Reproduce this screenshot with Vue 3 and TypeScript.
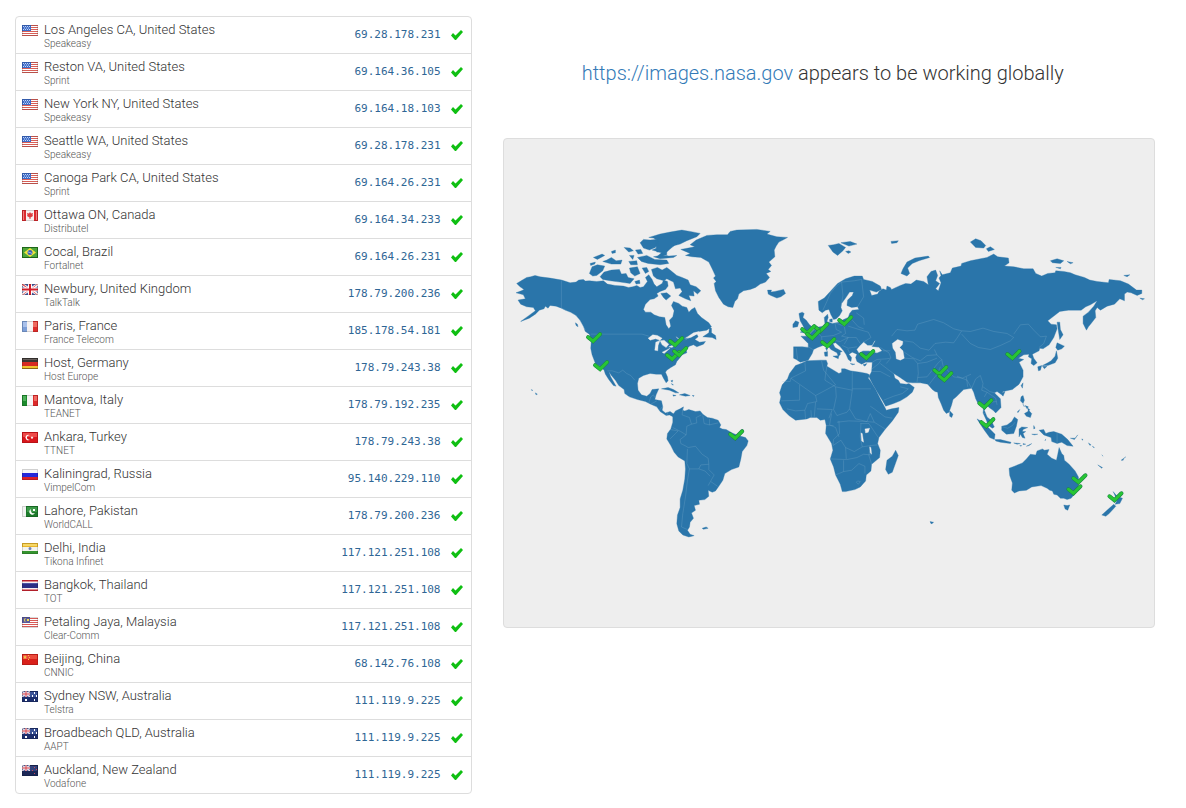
<script setup lang="ts">
type Shape = [fill: string, d: string]

interface Server {
  flag: string
  place: string
  provider: string
  ip: string
}

const box = 'M0 0h16v11H0z'
const stripes = 'M0 1h16v1H0zM0 3h16v1H0zM0 5h16v1H0zM0 7h16v1H0zM0 9h16v1H0z'
const unionJack: Shape[] = [
  ['#4c5ea3', 'M0 0h8v6H0z'],
  ['#e9dfe8', 'M0 0h1l7 5v1H7L0 1zM7 0h1v1L1 6H0V5z'],
  ['#f3e6ea', 'M3 0h2v6H3zM0 2h8v2H0z'],
  ['#d4434c', 'M3.5 0h1v6h-1zM0 2.5h8v1H0z'],
]

const flags: Record<string, Shape[]> = {
  us: [
    ['#fff', box],
    ['#d95f57', 'M0 0h16v1H0zM0 2h16v1H0zM0 4h16v1H0zM0 6h16v1H0zM0 8h16v1H0zM0 10h16v1H0z'],
    ['#3d6cc9', 'M0 0h9v6H0z'],
    ['#c5d6f5', 'M1 1h1v1H1zM3 1h1v1H3zM5 1h1v1H5zM7 1h1v1H7zM2 2.5h1v1H2zM4 2.5h1v1H4zM6 2.5h1v1H6zM1 4h1v1H1zM3 4h1v1H3zM5 4h1v1H5zM7 4h1v1H7z'],
  ],
  ca: [
    ['#f7f2f2', box],
    ['#dc2a2e', 'M0 0h4v11H0zM12 0h4v11h-4z'],
    ['#ee7f7f', 'M1 1h1v9H1zM14 1h1v9h-1z'],
    ['#dd3b3d', 'M8 2l1 1.5 2-.5-.5 2L11 6 8.5 7.5V9h-1V7.500L5 6l.5-1L5 3l2 .5z'],
  ],
  br: [
    ['#247a1d', box],
    ['#4da53c', 'M1 1h14v9H1z'],
    ['#f0e63c', 'M8 1l6 4.500L8 10 2 5.500z'],
    ['#3c62b5', 'M8 3a2.500 2.500 0 1 1 0 5a2.500 2.500 0 1 1 0-5z'],
    ['#b9cdea', 'M6 4.500l4 1.500v.7L6 5.200z'],
  ],
  gb: [
    ['#4a5aa0', box],
    ['#fff', 'M0 0h2l14 9v2h-2L0 2zM14 0h2v2L2 11H0V9z'],
    ['#d8454c', 'M0 0h1l5 4H5L0 1zM15 0h1L11 4h-1zM16 11h-1l-5-4h1zM0 11h1l5-4H5z'],
    ['#fff', 'M6 0h4v11H6zM0 3.500h16v4H0z'],
    ['#d21f2b', 'M7 0h2v11H7zM0 4.500h16v2H0z'],
  ],
  fr: [['#f6f2f2', box], ['#7d9fd8', 'M0 0h5v11H0z'], ['#a9c0ea', 'M1 1h4v5H1z'], ['#dd2d2b', 'M11 0h5v11h-5z'], ['#ee6a5f', 'M11 1h4v5h-4z']],
  de: [['#3a3533', box], ['#655d5a', 'M1 1h14v1H1z'], ['#d62a22', 'M0 4h16v4H0z'], ['#f0c22e', 'M0 8h16v3H0z'], ['#a77b16', 'M0 10h16v1H0z']],
  it: [['#f7f5f5', box], ['#1d8a2d', 'M0 0h5v11H0z'], ['#4fb05a', 'M1 1h3v5H1z'], ['#dc2a2b', 'M11 0h5v11h-5z'], ['#ef6a62', 'M12 1h3v5h-3z']],
  tr: [
    ['#d9161c', box],
    ['#ee4a49', 'M1 1h14v4H1z'],
    ['#fff', 'M8 3.500A2.700 2.700 0 1 0 8 7.500A2.200 2.200 0 1 1 8 3.500zM10 4l.5 1h1l-.8.7.3 1.200-1-.6-1 .6.300-1.200-.8-.7h1z'],
  ],
  ru: [['#f5f5f5', box], ['#2427d8', 'M0 4h16v4H0z'], ['#d91f26', 'M0 8h16v3H0z']],
  pk: [
    ['#f2f4f2', box],
    ['#1c7a2b', 'M4 0h12v11H4z'],
    ['#3c9a48', 'M5 1h10v5H5z'],
    ['#fff', 'M9 3A3 3 0 1 0 13 7A3 3 0 0 1 9 3zM11 3h2v2h-2z'],
  ],
  in: [['#f4f4ee', box], ['#e9b72c', 'M0 0h16v4H0z'], ['#f6d766', 'M1 1h14v2H1z'], ['#35942f', 'M0 8h16v3H0z'], ['#6f83b4', 'M8 4a1.500 1.500 0 1 1 0 3a1.500 1.500 0 1 1 0-3z']],
  th: [['#f4f1f3', box], ['#d02532', 'M0 0h16v1.500H0zM0 9.500h16V11H0z'], ['#2b2f86', 'M0 3h16v5H0z'], ['#5055a8', 'M0 3h16v1H0z']],
  my: [
    ['#fff', box],
    ['#d85a56', stripes],
    ['#5a5a9c', 'M0 0h8v6H0z'],
    ['#f1df4f', 'M4 1a2 2 0 1 0 0 4A2.500 2.500 0 0 1 4 1zM5 2h2v2H5z'],
  ],
  cn: [['#d9201a', box], ['#ec4b3c', 'M1 1h14v4H1z'], ['#f5c84a', 'M3 1l.8 1.500H5L4 3.500 4.500 5 3 4.200 1.500 5 2 3.500l-1-1h1.300zM6 1h1v1H6zM7 3h1v1H7zM6 5h1v1H6z']],
  au: [['#1d2f6e', box], ['#3c5497', 'M1 1h14v5H1z'], ...unionJack, ['#fff', 'M3 8h2v2H3zM12 1h1v2h-1zM10 4h1v2h-1zM14 4h1v2h-1zM12 8h1v2h-1z']],
  nz: [['#1b2757', box], ['#34437c', 'M1 1h14v5H1z'], ...unionJack, ['#c94a5c', 'M12 2h1v1h-1zM10 5h1v1h-1zM14 4h1v1h-1zM12 8h1v1h-1z']],
}

const servers: Server[] = [
  { flag: 'us', place: 'Los Angeles CA, United States', provider: 'Speakeasy', ip: '69.28.178.231' },
  { flag: 'us', place: 'Reston VA, United States', provider: 'Sprint', ip: '69.164.36.105' },
  { flag: 'us', place: 'New York NY, United States', provider: 'Speakeasy', ip: '69.164.18.103' },
  { flag: 'us', place: 'Seattle WA, United States', provider: 'Speakeasy', ip: '69.28.178.231' },
  { flag: 'us', place: 'Canoga Park CA, United States', provider: 'Sprint', ip: '69.164.26.231' },
  { flag: 'ca', place: 'Ottawa ON, Canada', provider: 'Distributel', ip: '69.164.34.233' },
  { flag: 'br', place: 'Cocal, Brazil', provider: 'Fortalnet', ip: '69.164.26.231' },
  { flag: 'gb', place: 'Newbury, United Kingdom', provider: 'TalkTalk', ip: '178.79.200.236' },
  { flag: 'fr', place: 'Paris, France', provider: 'France Telecom', ip: '185.178.54.181' },
  { flag: 'de', place: 'Host, Germany', provider: 'Host Europe', ip: '178.79.243.38' },
  { flag: 'it', place: 'Mantova, Italy', provider: 'TEANET', ip: '178.79.192.235' },
  { flag: 'tr', place: 'Ankara, Turkey', provider: 'TTNET', ip: '178.79.243.38' },
  { flag: 'ru', place: 'Kaliningrad, Russia', provider: 'VimpelCom', ip: '95.140.229.110' },
  { flag: 'pk', place: 'Lahore, Pakistan', provider: 'WorldCALL', ip: '178.79.200.236' },
  { flag: 'in', place: 'Delhi, India', provider: 'Tikona Infinet', ip: '117.121.251.108' },
  { flag: 'th', place: 'Bangkok, Thailand', provider: 'TOT', ip: '117.121.251.108' },
  { flag: 'my', place: 'Petaling Jaya, Malaysia', provider: 'Clear-Comm', ip: '117.121.251.108' },
  { flag: 'cn', place: 'Beijing, China', provider: 'CNNIC', ip: '68.142.76.108' },
  { flag: 'au', place: 'Sydney NSW, Australia', provider: 'Telstra', ip: '111.119.9.225' },
  { flag: 'au', place: 'Broadbeach QLD, Australia', provider: 'AAPT', ip: '111.119.9.225' },
  { flag: 'nz', place: 'Auckland, New Zealand', provider: 'Vodafone', ip: '111.119.9.225' },
]

interface Region {
  transform: string
  land: string
  water?: string
  borders?: string
}

// Each region keeps its own local grid, three units to one map unit.
const regions: Region[] = [
  {
    // North America, Greenland, Caribbean
    transform: 'translate(500 220) scale(.33333)',
    land:
      'M50 190L62 183 80 172 92 170 105 166 120 170 150 174 185 180 210 188 228 186 236 180 250 178 256 183 268 182 290 184 310 182 322 192 345 196 370 198 385 202 398 200 410 196 420 202 430 200 442 184 436 172 446 164 456 178 462 192 470 200 486 190 490 180 502 184 504 198 496 208 480 214 470 220 474 228 462 236 450 238 436 252 430 268 436 276 452 276 462 284 478 290 494 292 498 314 506 326 512 318 508 300 518 290 522 272 514 256 520 244 536 250 546 258 560 262 566 276 574 268 584 262 592 280 604 292 626 308 634 320 620 330 596 334 580 340 560 356 552 362 572 350 590 342 594 350 584 358 598 366 616 364 610 372 590 380 580 374 568 378 558 388 560 398 546 404 540 412 530 424 526 434 512 442 500 450 496 456 502 470 504 482 498 488 490 474 484 462 468 462 450 460 430 466 416 474 412 490 414 510 424 524 440 528 450 520 456 508 476 506 468 524 464 538 484 542 488 560 486 570 496 578 510 574 522 582 520 590 508 584 498 586 480 574 470 560 452 552 436 544 412 538 388 530 374 520 372 508 356 496 346 480 334 466 326 454 332 470 340 484 348 498 340 496 326 478 316 462 312 450 302 440 286 430 276 404 272 384 274 360 268 342 256 334 250 318 240 300 228 286 212 276 196 270 184 264 168 258 150 256 144 264 136 258 132 266 118 270 106 282 88 294 62 304 84 288 106 272 100 262 80 260 62 252 54 240 76 236 70 224 48 218 64 212 72 208 60 200z' +
      'M542 88L564 84 584 80 570 74 588 60 620 46 650 44 682 44 690 34 710 30 770 28 810 34 800 42 830 50 862 52 848 60 836 66 828 78 822 90 824 110 806 126 814 136 804 148 812 154 798 160 808 172 796 186 780 192 766 202 750 208 730 212 716 222 712 236 704 244 698 262 684 260 670 252 656 232 646 212 642 190 648 184 640 174 646 168 636 146 626 126 602 112 576 110 556 106 570 100z' +
      'M446 52L480 42 510 36 545 30 570 34 600 40 590 50 560 62 540 72 524 76 500 90 500 104 470 110 484 98 456 90 470 84 476 64 460 54zM420 68L430 58 450 60 466 58 474 66 466 82 448 90 430 84zM466 62L510 44 540 60 520 78 500 96 470 96zM460 110L490 104 506 108 530 106 520 112 480 116z' +
      'M268 160L276 140 292 134 314 138 308 152 290 166 278 168zM300 170L312 156 334 150 358 148 364 162 378 160 384 172 402 176 390 190 360 186 330 182 308 178zM280 112L306 102 314 106 292 118zM308 124L320 120 334 112 348 122 366 120 362 132 334 132zM334 94L346 90 346 98 336 100zM372 82L390 84 400 92 386 96zM406 90L422 88 428 100 414 102zM388 106L402 106 398 118zM412 112L440 106 464 118 500 120 506 130 480 134 444 130 424 124zM388 144L412 140 420 160 404 168 392 158zM426 144L440 142 446 154 436 160zM386 124L410 122 412 134 392 134zM270 130L286 126 284 132 272 136zM404 184L418 180 420 190 408 192z' +
      'M454 148L472 142 486 150 500 142 510 150 530 166 546 172 564 180 570 194 588 200 602 212 592 222 580 212 582 228 566 226 572 242 556 236 536 226 546 214 540 204 526 206 520 186 500 176 492 182 470 176 460 168zM482 220L500 218 512 228 498 240 490 232zM608 350L626 338 628 322 634 324 634 338 646 346 648 358 636 352z' +
      'M226 308L232 312 234 320 228 316zM254 330L264 332 278 344 272 346zM484 506L504 502 520 508 536 518 526 518 508 510zM538 524L554 520 570 526 556 528zM518 524L528 526 520 528zM576 526L582 526 580 529zM512 482L518 480 516 486zM514 490L520 494 516 494zM106 518L112 522 108 524zM94 508L98 510 96 512z' +
      'M802 210L814 210 812 216 824 214 850 208 856 220 842 230 830 234 812 226 804 222z',
    water: 'M444 354L458 344 472 346 486 354 480 360 466 356 450 360zM467 366L480 360 474 376 473 392 464 390zM480 362L492 360 506 372 498 382 486 374zM486 396L510 384 492 400zM506 380L524 373 516 382zM556 354L580 338 596 334 590 342 572 352zM528 350L540 362 538 358zM486 236L494 240 488 244z',
    borders: 'M184 180V264L208 276 226 284 240 302 256 330M272 342H426L446 348M474 362L488 376 504 384 526 378 540 364 560 350 566 356M322 452L336 452 356 458 368 450 380 460 392 466 404 480M446 548L452 530 460 524 464 532M452 552L470 542 M478 570L488 558M500 584L504 576',
  },
  {
    // South America
    transform: 'translate(650 380) scale(.33333)',
    land: 'M68 104L76 92 90 86 100 80 98 90 104 92 116 88 136 94 150 92 158 102 172 112 186 114 204 120 212 134 208 142 216 146 228 148 246 158 264 166 286 172 294 182 290 196 276 214 272 236 266 260 244 268 224 280 218 300 206 318 196 332 186 336 174 330 176 348 164 358 146 360 148 372 132 376 136 390 124 398 130 414 120 426 118 440 112 450 120 462 132 466 116 470 98 464 86 452 80 430 82 404 90 382 90 356 98 330 104 296 106 266 104 242 84 230 72 216 62 196 50 176 52 160 62 146 68 126zM156 444L168 440 174 444 160 447z',
    borders: 'M98 84L96 104 118 112 124 132 110 138 108 164 90 178 92 190 108 198 114 202 136 198 156 222 174 234 176 252 152 254 146 266 118 266 110 250 112 206M60 148L84 152 76 160 60 176M68 142L92 154 108 164M124 132L140 128 138 112 154 104M158 106L162 130 178 134 204 128M178 116V134M176 252L176 268 192 284 184 298 174 316M146 266L164 272 180 288M182 304L202 318M118 266L112 300 106 350 98 400 94 440 112 448',
  },
  {
    // Europe and Asia
    transform: 'translate(780 230) scale(.33333)',
    land:
      'M40 350L66 350 84 352 84 340 74 330 62 318 82 318 92 308 108 292 128 288 134 280 132 262 142 252 144 262 140 274 156 280 176 276 190 268 204 262 208 250 216 240 236 238 232 230 214 232 200 226 202 210 216 196 220 186 208 186 196 204 184 220 182 232 186 242 178 256 168 266 160 268 152 254 146 238 136 240 126 248 116 240 114 214 132 204 150 184 172 160 196 146 222 138 246 138 250 148 276 154 300 168 304 178 288 186 268 180 274 196 292 192 296 184 308 176 318 180 320 168 330 172 334 178 360 166 376 160 392 162 408 150 430 154 444 164 440 140 452 124 466 120 472 136 466 152 478 160 466 176 474 182 482 158 476 144 482 136 478 122 486 134 510 128 516 114 542 108 544 100 570 92 600 86 620 82 640 72 652 80 684 84 686 98 672 108 700 110 730 116 758 116 766 130 784 138 802 130 824 128 826 122 850 124 870 128 884 134 912 142 928 150 950 154 984 158 986 148 1020 152 1044 162 1068 180 1084 180 1084 190 1070 196 1052 188 1040 186 1032 192 1032 212 1018 206 1002 222 980 228 960 240 950 232 944 242 946 262 932 280 924 290 918 300 908 280 908 258 924 246 940 228 950 212 930 224 916 230 902 240 864 240 838 244 802 272 812 282 828 284 830 296 820 322 806 344 788 356 778 354 776 362 756 372 760 384 770 398 760 406 752 400 754 386 744 380 746 372 730 374 714 384 730 388 716 396 728 420 728 440 716 462 696 478 668 484 662 492 650 484 642 488 648 494 660 506 662 532 646 548 638 540 626 532 620 526 612 540 620 560 632 570 642 590 636 594 624 586 618 570 608 548 610 530 602 518 592 518 586 506 580 486 574 474 564 476 550 478 540 488 528 500 518 508 514 524 506 546 498 550 490 540 482 520 474 502 472 486 464 484 456 478 442 462 420 458 396 458 380 456 368 448 356 440 340 430 344 444 354 450 360 460 378 462 386 460 402 472 396 486 380 500 360 512 340 520 316 528 306 510 290 484 276 460 266 440 274 424 276 396 256 396 244 402 230 394 226 382 230 372 216 366 206 372 214 382 212 394 204 388 198 374 190 362 180 350 166 338 158 340 164 352 186 364 180 366 180 374 174 378 170 368 152 358 140 344 128 346 112 352 100 358 96 370 84 390 60 396 48 388 40 384z' +
      'M56 250L66 246 72 250 68 262 78 270 88 284 98 292 94 302 72 308 60 306 74 298 68 286 60 272zM38 282L46 272 56 276 52 290 38 292zM144 46L160 44 176 40 196 52 188 62 172 76 158 66zM182 38L210 34 230 42 206 48zM196 64L206 62 212 66 204 70zM362 130L368 116 380 96 404 84 444 78 448 82 416 92 396 100 382 114 388 130 380 138zM332 34L354 32 350 38 334 40z' +
      'M570 36L586 26 602 32 616 46 610 54 586 52zM618 56L630 50 642 58 624 64zM810 92L830 86 850 92 840 100 816 98zM860 94L878 98 870 101zM826 112L842 112 840 116zM1030 136L1048 134 1040 140zM1078 204L1092 206 1086 209z' +
      'M830 276L838 276 840 298 848 314 838 328 834 304zM826 352L830 338 852 348 844 356 832 360zM828 362L832 384 824 398 802 406 786 406 802 398 812 392 824 378zM772 410L784 406 780 420 774 422zM786 408L800 408 792 416zM722 466L728 458 726 474zM660 490L674 484 668 498z' +
      'M158 378L176 376 174 386zM132 366L142 364 142 378 134 378zM136 354L142 352 140 362zM210 400L224 402 216 404zM248 404L260 400 254 408zM148 268L156 266 156 276 148 274z',
    water: 'M230 358L240 346 250 336 262 346 276 346 284 332 274 350 296 352 304 362 290 368 266 362 248 362 236 368zM336 340L352 328 368 334 366 344 358 352 368 362 372 384 360 390 348 386 346 366 338 354z',
    borders:
      'M60 350H84L98 358M48 354L52 388M128 240L140 214 150 190 168 168 184 156M184 156L188 196 182 232M244 148L250 200 232 230M184 156L222 152 244 148M104 300L124 320 126 342M124 320L160 316 184 306 168 298 164 278M164 278L192 288 196 310 184 318 204 322 192 342M156 330L180 334 204 322 228 322 240 340M204 288L236 298 264 306 272 322 250 336M216 270L234 290 250 296M228 248L250 264 252 284M186 346L204 354 230 350M202 356L208 368M300 352L326 368 332 384 318 386 290 388 276 396M308 362L330 362M334 318L350 298 380 302 404 300 412 282 460 268 490 278 520 296 544 302M544 302L530 324 520 338 496 336 464 340 446 360 420 354 398 336 372 332M372 366L396 382 420 392 440 376 470 374 462 358M372 384L400 386 412 400 414 430 410 456M412 400L440 396 470 384M470 374L484 388 472 400 456 420 440 440 412 442M484 388L488 406 520 440 546 444 572 432M444 466L456 450 472 430 480 410M530 438L560 450 574 474M558 440L562 470M544 302L570 304 608 294 640 304 680 310 700 322 690 332 660 346 630 358 594 352 570 340 544 312M700 312L720 284 744 282 760 300 780 320 798 318 790 340 776 352M574 474L586 446 600 436 608 460 604 480 620 486 612 500M608 470L628 484 642 488M620 486L646 504 650 524M630 516L648 514M270 420L296 400 302 390M276 424L300 424 330 440M300 400L326 420 342 432M318 400L330 386M310 510L340 498 366 490 384 476M360 470L384 476',
  },
  {
    // Africa
    transform: 'translate(770 350) scale(.33333)',
    land: 'M76 46L92 40 110 32 150 30 168 30 172 40 170 48 190 60 206 70 214 66 214 56 224 56 240 62 270 66 290 70 298 74 294 84 300 92 316 118 330 146 344 172 348 180 364 176 386 172 384 186 366 212 344 238 326 262 322 280 330 300 328 322 304 342 302 362 288 374 286 392 270 410 254 418 226 424 216 424 210 402 196 374 190 350 180 326 188 300 184 280 166 250 168 226 164 208 150 210 140 202 120 202 110 206 76 210 56 196 38 178 28 158 32 140 28 128 36 104 52 86 58 70zM376 300L384 316 366 366 354 372 346 358 350 330 366 318zM480 514L490 516 484 520z',
    water: 'M284 236L298 234 294 246 286 248zM272 248L276 250 280 276 274 272zM298 290L302 292 304 312 300 308z',
    borders: 'M104 36L106 62 62 84 60 94 36 94M62 84L136 136 196 104 160 60 154 32M170 48L166 72 164 90 196 110 246 120 246 62M246 116H302M88 104L88 150 32 152M246 120L238 176 256 206 290 214 300 190M196 110L198 140 190 178 200 196 230 186 238 176M136 136L140 154 112 160 104 180 76 182 50 176M104 180L106 206M122 180L124 204M136 156L132 200M140 176L186 178 176 204M184 190L178 224 196 232 206 260M168 226H190M200 216L236 212 290 214 312 216 344 236M300 168L312 176 344 200 366 204 M300 190L312 216M206 212L208 250 190 268 188 286 212 270 226 292 252 304 276 290 270 260 272 220M270 220H296L324 262M180 326L230 328 260 322 280 312 302 314M226 292L228 326M220 330V364L196 374M220 364L244 360 266 340 284 348 284 370M276 290L300 286 322 284M262 392L270 394 264 402 258 396zM300 286L296 316 304 342',
  },
  {
    // South-East Asia and Oceania
    transform: 'translate(920 360) scale(.33333)',
    land:
      'M266 324L282 318 306 308 318 296 330 282 346 284 350 272 366 266 372 270 386 268 380 282 394 294 408 300 412 282 416 262 424 280 430 286 432 300 446 312 464 332 474 350 474 376 464 400 452 414 440 418 430 414 420 414 410 404 400 402 396 392 388 390 380 384 362 376 334 380 318 390 296 392 282 398 274 390 276 368 268 346zM430 434L440 436 448 434 442 450 434 446zM544 464L562 448 580 432 586 438 566 460 556 468zM578 394L590 408 606 414 598 430 584 432 590 420z' +
      'M170 176L184 184 204 202 224 222 222 238 208 232 192 210 180 192zM224 238L240 238 272 246 270 250 240 246 226 242zM280 248L300 250 290 252zM298 256L304 256 302 258zM318 258L334 250 326 256zM308 250L316 252 308 253zM244 198L260 194 274 184 282 170 292 178 288 198 280 220 258 222 244 210zM296 206L304 200 322 202 308 208 306 214 316 214 308 220 314 234 306 232 300 222 296 230zM340 196L344 204 340 206zM334 222L352 222 342 224zM356 210L370 208 376 220 386 216 400 214 424 222 442 238 458 258 440 256 424 246 410 250 394 244 392 232 370 224zM450 234L464 234 472 224 462 238zM376 236L374 242z' +
      'M302 110L308 106 312 120 308 130 300 122zM314 136L324 140 320 146zM308 132L312 140zM312 160L326 152 334 160 330 172 318 168zM322 144L328 148 324 156zM290 156L298 148 294 156zM88 152L98 162 94 172 88 168zM30 484L38 487 32 490zM484 236L488 238 486 240zM504 248L512 254 508 255zM516 258L522 262 518 261zM532 314L546 322 544 324zM544 284L548 288zM602 300L610 294 608 300zM610 294L616 290z',
    borders: 'M410 218V248M246 200L262 204 276 196 284 186M186 158L194 160',
  },
]

const markers: [number, number][] = [
  [593, 341], [600, 369], [675, 345], [672, 359], [679, 355], [735, 438],
  [820, 331], [807, 333], [812, 338], [827, 346], [844, 324], [866, 358],
  [939, 374], [944, 380], [1012, 358], [984, 407], [986, 426],
  [1078, 482], [1073, 493], [1114, 500],
]
</script>

<template>
  <main class="page">
    <section class="results" aria-label="Server results">
      <ul class="server-list">
        <li v-for="server in servers" :key="server.place" class="server">
          <svg class="flag" viewBox="0 0 16 11" aria-hidden="true">
            <path v-for="([fill, d], i) in flags[server.flag]" :key="i" :fill="fill" :d="d" />
            <path class="flag-edge" d="M.5 .5h15v10H.5z" />
          </svg>
          <div class="where">
            <div class="place">{{ server.place }}</div>
            <div class="provider">{{ server.provider }}</div>
          </div>
          <span class="ip">{{ server.ip }}</span>
          <svg class="tick" viewBox="0 0 12 10" role="img" aria-label="Working">
            <path d="M0 5.500L2 3 4.500 5.500 10 0 12 2 5 10 4 10z" />
          </svg>
        </li>
      </ul>
    </section>

    <section class="summary">
      <h1 class="headline">
        <a href="https://images.nasa.gov">https://images.nasa.gov</a> appears to be working globally
      </h1>
      <div class="map-panel">
        <svg class="map" viewBox="504 139 650 488" role="img" aria-label="World map of server locations">
          <g v-for="region in regions" :key="region.transform" :transform="region.transform">
            <path class="land" :d="region.land" />
            <path v-if="region.water" class="water" :d="region.water" />
            <path v-if="region.borders" class="border" :d="region.borders" />
          </g>
          <g v-for="([x, y], i) in markers" :key="i" :transform="`translate(${x} ${y})`">
            <path class="marker-edge" d="M-5 -4L0 0 7 -7" />
            <path class="marker" d="M-5 -4L0 0 7 -7" />
          </g>
        </svg>
      </div>
    </section>
  </main>
</template>

<style>
body {
  margin: 0;
  background: #fff;
}
</style>

<style scoped>
.page {
  display: grid;
  grid-template-columns: 5fr 7fr;
  padding: 16px 16px 14px 0;
  color: #333;
  font-family: Roboto, "Liberation Sans", Arial, sans-serif;
  font-weight: 300;
}

.results,
.summary {
  min-width: 0;
  padding: 0 15px;
}

.results {
  padding-right: 16px;
}

.server-list {
  margin: 0;
  padding: 0;
  list-style: none;
  border: 1px solid #ddd;
  border-radius: 4px;
}

.server {
  display: flex;
  align-items: center;
  padding: 5px 8px 3px 6px;
}

.server + .server {
  border-top: 1px solid #ddd;
}

.flag {
  flex: none;
  align-self: flex-start;
  width: 16px;
  height: 11px;
  margin: 3px 6px 0 0;
}

.flag-edge {
  fill: none;
  stroke: #000;
  stroke-opacity: .15;
}

.where {
  flex: 1;
  min-width: 0;
}

.place {
  font-size: 13px;
  line-height: 16px;
}

.provider {
  color: #555;
  font-size: 10px;
  line-height: 12px;
}

.ip {
  margin-bottom: 2px;
  color: #2f6695;
  font-family: "DejaVu Sans Mono", "Liberation Mono", monospace;
  font-size: 11px;
  font-weight: 400;
  line-height: 16px;
}

.tick {
  flex: none;
  width: 12px;
  height: 10px;
  margin: 0 0 2px 10px;
  fill: #0fbf12;
}

.headline {
  margin: 44px 0 52px;
  padding-right: 12px;
  font-size: 20px;
  font-weight: 300;
  line-height: 26px;
  text-align: center;
}

.headline a {
  color: #337ab7;
  text-decoration: none;
}

.map-panel {
  overflow: hidden;
  border: 1px solid #ddd;
  border-radius: 4px;
  background: #eee;
}

.map {
  display: block;
  width: 100%;
  height: auto;
}

.land {
  fill: #2a75aa;
  stroke: #2a75aa;
  stroke-width: 1;
  stroke-linejoin: round;
}

.water {
  fill: #eee;
  stroke: #eee;
  stroke-width: 1;
}

.border {
  fill: none;
  stroke: #8fb8d3;
  stroke-width: 1;
  stroke-opacity: .7;
  stroke-linejoin: round;
}

.marker-edge,
.marker {
  fill: none;
  stroke: #1c7f48;
  stroke-width: 4;
  stroke-linecap: round;
}

.marker {
  stroke: #27c534;
  stroke-width: 3;
}
</style>
